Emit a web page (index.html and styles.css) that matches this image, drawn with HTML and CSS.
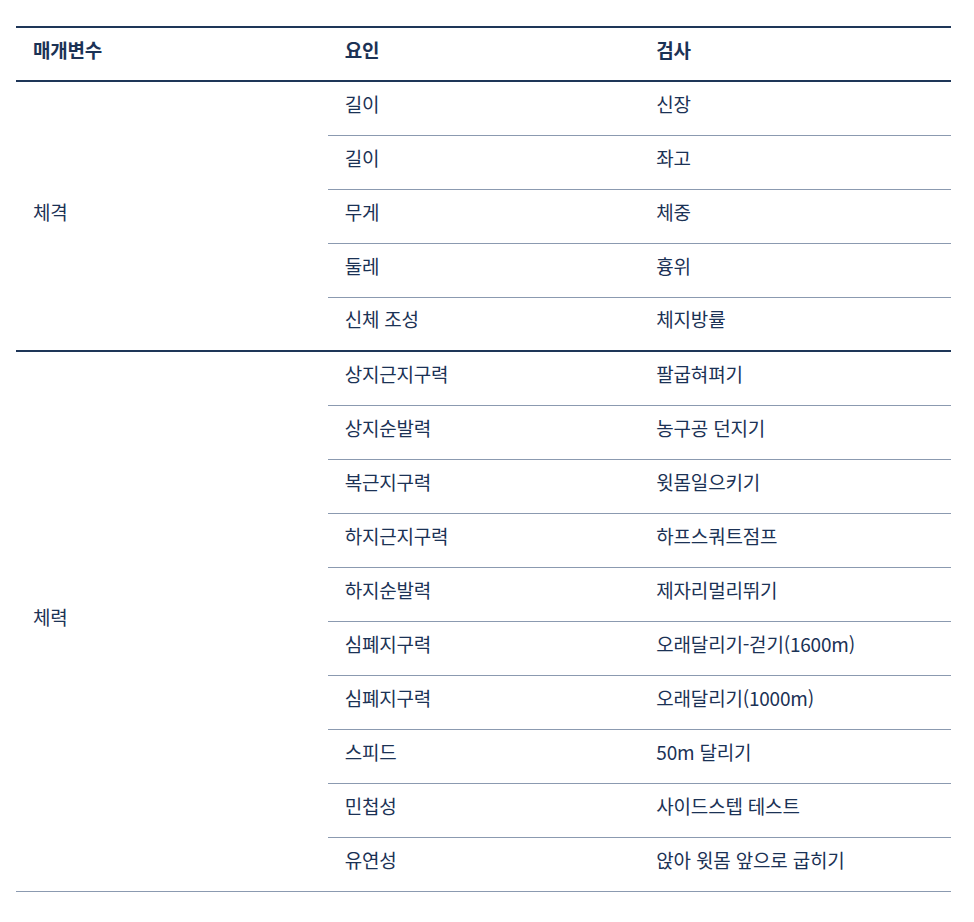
FILE: index.html
```html
<!DOCTYPE html>
<html lang="ko">
<head>
<meta charset="utf-8">
<title>체력 측정 항목</title>
<link rel="stylesheet" href="styles.css">
</head>
<body>
<div class="page">
<table class="spec">
  <colgroup><col class="c"><col class="c"><col class="c"></colgroup>
  <thead>
    <tr><th>매개변수</th><th>요인</th><th>검사</th></tr>
  </thead>
  <tbody class="group">
    <tr><td rowspan="5" class="param">체격</td><td>길이</td><td>신장</td></tr>
    <tr><td>길이</td><td>좌고</td></tr>
    <tr><td>무게</td><td>체중</td></tr>
    <tr><td>둘레</td><td>흉위</td></tr>
    <tr><td>신체 조성</td><td>체지방률</td></tr>
  </tbody>
  <tbody class="group">
    <tr><td rowspan="10" class="param">체력</td><td>상지근지구력</td><td>팔굽혀펴기</td></tr>
    <tr><td>상지순발력</td><td>농구공 던지기</td></tr>
    <tr><td>복근지구력</td><td>윗몸일으키기</td></tr>
    <tr><td>하지근지구력</td><td>하프스쿼트점프</td></tr>
    <tr><td>하지순발력</td><td>제자리멀리뛰기</td></tr>
    <tr><td>심폐지구력</td><td>오래달리기-걷기(1600m)</td></tr>
    <tr><td>심폐지구력</td><td>오래달리기(1000m)</td></tr>
    <tr><td>스피드</td><td>50m 달리기</td></tr>
    <tr><td>민첩성</td><td>사이드스텝 테스트</td></tr>
    <tr><td>유연성</td><td>앉아 윗몸 앞으로 굽히기</td></tr>
  </tbody>
</table>
</div>
</body>
</html>
```
FILE: styles.css
```css
html, body {
  margin: 0;
  padding: 0;
  background: #ffffff;
}
.page {
  padding: 26px 23px 20px 16px;
}
.spec {
  width: 935px;
  border-collapse: collapse;
  table-layout: fixed;
  font-family: "Noto Sans CJK KR", "Noto Sans", sans-serif;
  font-size: 19px;
  color: #1b3255;
}
.spec col.c {
  width: 33.333%;
}
.spec th,
.spec td {
  height: 54px;
  padding: 0 0 9px 17px;
  text-align: left;
  vertical-align: middle;
  line-height: 24px;
  box-sizing: border-box;
  letter-spacing: -0.2px;
}
.spec th {
  font-size: 19px;
  font-weight: 700;
  border-top: 2px solid #1e3658;
  border-bottom: 2px solid #1e3658;
}
.spec td {
  font-weight: 400;
  border-bottom: 1px solid #8b9ab0;
}
.spec tbody.group + tbody.group tr:first-child td {
  border-top: 2px solid #1e3658;
}
.spec td.param {
  border-bottom: 1px solid #8b9ab0;
}
```
